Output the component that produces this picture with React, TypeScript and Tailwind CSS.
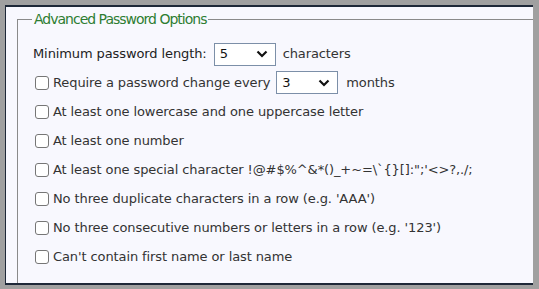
import React from "react";

function Chevron() {
  return (
    <svg width="12" height="8" viewBox="0 0 12 8" className="shrink-0">
      <polyline points="1.5,1.5 6,6 10.5,1.5" fill="none" stroke="#111" strokeWidth="2.2" />
    </svg>
  );
}

function FakeSelect({ value }: { value: string }) {
  return (
    <div className="flex items-center justify-between w-[62px] h-[23px] border border-[#7c8fa8] bg-white pl-[5px] pr-[7px] text-[#111]">
      <span>{value}</span>
      <Chevron />
    </div>
  );
}

function Box() {
  return <span className="inline-block w-[14px] h-[14px] rounded-[3px] border border-[#767676] bg-white shrink-0" />;
}

const rules = [
  "At least one lowercase and one uppercase letter",
  "At least one number",
  "At least one special character !@#$%^&*()_+~=\\`{}[]:\";'<>?,./;",
  "No three duplicate characters in a row (e.g. 'AAA')",
  "No three consecutive numbers or letters in a row (e.g. '123')",
  "Can't contain first name or last name",
];

export default function App() {
  return (
    <div
      className="w-[539px] h-[289px] bg-[#a0a0a0] pt-[5px] pl-[5px] pr-[6px] pb-[4px]"
      style={{ fontFamily: "Verdana, 'DejaVu Sans', sans-serif" }}
    >
      <div className="h-full overflow-hidden bg-[#f8f8fe] border-t-2 border-l border-b-2 border-[#1e2838]">
        <fieldset className="ml-[11px] mt-[4px] w-[540px] h-[300px] border border-[#8a8a8a] pl-[15px]">
          <legend className="ml-[-1px] px-[2px] text-[14px] leading-[17px] tracking-[-1px] text-[#2e7d32]">
            Advanced Password Options
          </legend>
          <div className="flex flex-col text-[13px] tracking-[-0.1px] text-[#333] pt-[12px]">
            <div className="flex items-center h-[28px]">
              <span className="text-[#222]">Minimum password length:</span>
              <span className="ml-[7px]"><FakeSelect value="5" /></span>
              <span className="ml-[7px]">characters</span>
            </div>
            <div className="flex items-center h-[29px] pl-[2px]">
              <Box />
              <span className="ml-[4px]">Require a password change every</span>
              <span className="ml-[6px]"><FakeSelect value="3" /></span>
              <span className="ml-[8px]">months</span>
            </div>
            {rules.map((r) => (
              <div key={r} className="flex items-center h-[29px] pl-[2px]">
                <Box />
                <span className="ml-[4px] whitespace-nowrap">{r}</span>
              </div>
            ))}
          </div>
        </fieldset>
      </div>
    </div>
  );
}
